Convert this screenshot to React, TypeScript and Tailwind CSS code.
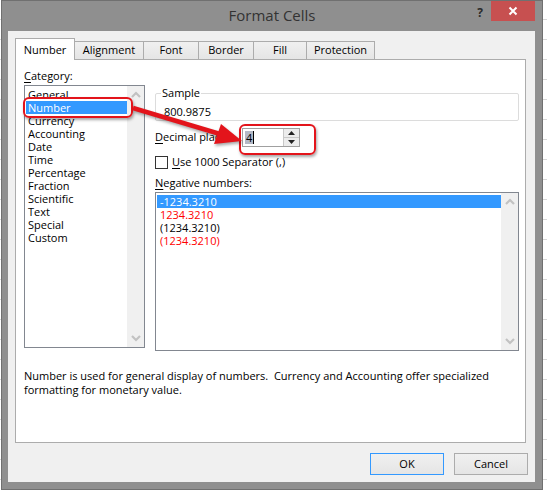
import React from 'react'

const categories = [
  'General',
  'Number',
  'Currency',
  'Accounting',
  'Date',
  'Time',
  'Percentage',
  'Fraction',
  'Scientific',
  'Text',
  'Special',
  'Custom',
]

const negatives = [
  { text: '-1234.3210', red: false, selected: true },
  { text: '1234.3210', red: true, selected: false },
  { text: '(1234.3210)', red: false, selected: false },
  { text: '(1234.3210)', red: true, selected: false },
]

const tabs = [
  { label: 'Alignment', w: 'w-[69px]' },
  { label: 'Font', w: 'w-[55px]' },
  { label: 'Border', w: 'w-[55px]' },
  { label: 'Fill', w: 'w-[53px]' },
  { label: 'Protection', w: 'w-[68px]' },
]

function Chevron({ up }: { up?: boolean }) {
  return (
    <svg width="10" height="7" viewBox="0 0 10 7">
      <polyline
        points={up ? '1,6 5,2 9,6' : '1,1 5,5 9,1'}
        fill="none"
        stroke="#c2c2c2"
        strokeWidth="2.2"
      />
    </svg>
  )
}

// disabled vertical scrollbar used by both list boxes
function ScrollBar() {
  return (
    <div className="w-[17px] h-full bg-[#f0f0f0] flex flex-col justify-between items-center py-[5px]">
      <Chevron up />
      <Chevron />
    </div>
  )
}

export default function App() {
  return (
    <div className="relative w-[547px] h-[492px] overflow-hidden bg-[repeating-linear-gradient(to_bottom,#ffffff_0px,#ffffff_19px,#d8d8d8_19px,#d8d8d8_20px)] font-['Open_Sans',sans-serif] text-[11px] text-black">
      {/* window */}
      <div className="ml-px w-[542px] h-[490px] border border-[#707070] bg-[#8f8f8f] flex flex-col">
        {/* title bar */}
        <div className="relative h-[30px] shrink-0">
          <div className="text-center text-[15px] leading-[28px] text-[#333333]">Format Cells</div>
          <span className="absolute right-[59px] top-[4px] text-[12px] font-bold leading-[16px] text-[#2b2b2b]">?</span>
          <div className="absolute right-[7px] top-0 w-[44px] h-[20px] bg-[#c75050] flex items-center justify-center">
            <svg width="10" height="10" viewBox="0 0 10 10">
              <path d="M1.5 1.5 L8.5 8.5 M8.5 1.5 L1.5 8.5" stroke="#fff" strokeWidth="2" />
            </svg>
          </div>
        </div>

        {/* client area */}
        <div className="ml-[6px] w-[527px] h-[451px] bg-[#f0f0f0] pt-[7px] pl-[7px] flex flex-col">
          {/* tabs */}
          <div className="flex items-end h-[21px]">
            <div className="relative z-10 w-[60px] h-[22px] -mb-px bg-white border-l border-t border-r border-[#acacac] flex items-center justify-center pt-[1px]">
              Number
            </div>
            {tabs.map((t) => (
              <div
                key={t.label}
                className={`${t.w} h-[18px] border-t border-r border-[#acacac] bg-[linear-gradient(#f0f0f0,#e5e5e5)] flex items-center justify-center`}
              >
                {t.label}
              </div>
            ))}
          </div>

          {/* tab page */}
          <div className="w-[511px] h-[384px] bg-white border border-[#acacac] pt-[8px] pl-[8px] flex flex-col">
            <div className="flex gap-[10px]">
              {/* category column */}
              <div className="w-[121px] flex flex-col">
                <div className="h-[16px] leading-[16px]">
                  <u className="underline-offset-2">C</u>ategory:
                </div>
                <div className="mt-px h-[263px] border border-[#828790] flex">
                  <div className="flex-1 pt-[2px] pl-px">
                    {categories.map((c) => (
                      <div
                        key={c}
                        className={`h-[13px] leading-[13px] pl-[2px] ${c === 'Number' ? 'bg-[#3399ff] text-white' : ''}`}
                      >
                        {c}
                      </div>
                    ))}
                  </div>
                  <ScrollBar />
                </div>
              </div>

              {/* options column */}
              <div className="w-[364px] flex flex-col">
                <div className="relative mt-[25px] h-[28px] border border-[#dcdcdc] rounded-[2px] pl-[8px] pt-[10px] leading-[16px]">
                  <span className="absolute -top-[9px] left-[5px] bg-white px-px leading-[16px]">Sample</span>
                  800.9875
                </div>

                <div className="mt-[7px] h-[19px] flex items-center">
                  <div className="w-[87px]">
                    <u className="underline-offset-2">D</u>ecimal places:
                  </div>
                  <div className="w-[58px] h-[19px] border border-[#a0a0a0] bg-white flex">
                    <div className="flex-1 flex items-center pl-[2px]">
                      <span className="bg-[#b4b9c6] leading-[13px] px-px">4</span>
                      <span className="w-px h-[13px] bg-black" />
                    </div>
                    <div className="w-[16px] flex flex-col border-l border-[#c8c8c8]">
                      <div className="flex-1 flex items-center justify-center bg-[#ececec] border-b border-[#c8c8c8]">
                        <svg width="7" height="4" viewBox="0 0 7 4">
                          <polygon points="0,4 3.5,0 7,4" fill="#222" />
                        </svg>
                      </div>
                      <div className="flex-1 flex items-center justify-center bg-[#ececec]">
                        <svg width="7" height="4" viewBox="0 0 7 4">
                          <polygon points="0,0 7,0 3.5,4" fill="#222" />
                        </svg>
                      </div>
                    </div>
                  </div>
                </div>

                <div className="mt-[7px] h-[16px] flex items-center">
                  <div className="w-[13px] h-[13px] border border-[#333333] bg-white" />
                  <div className="ml-[4px] leading-[16px]">
                    <u className="underline-offset-2">U</u>se 1000 Separator (,)
                  </div>
                </div>

                <div className="mt-[5px] h-[16px] leading-[16px]">
                  <u className="underline-offset-2">N</u>egative numbers:
                </div>
                <div className="mt-px h-[159px] border border-[#828790] flex">
                  <div className="flex-1 pt-[2px] pl-px">
                    {negatives.map((n, i) => (
                      <div
                        key={i}
                        className={`h-[13px] leading-[13px] pl-[3px] ${n.selected ? 'bg-[#3399ff] text-white' : n.red ? 'text-[#ff0000]' : ''}`}
                      >
                        {n.text}
                      </div>
                    ))}
                  </div>
                  <ScrollBar />
                </div>
              </div>
            </div>

            <p className="mt-[18px] leading-[14px] whitespace-pre">
              {'Number is used for general display of numbers.  Currency and Accounting offer specialized\nformatting for monetary value.'}
            </p>
          </div>

          {/* buttons */}
          <div className="mt-[10px] flex justify-end gap-[10px] pr-[7px]">
            <button className="w-[74px] h-[22px] border border-[#3399ff] bg-[linear-gradient(#f0f0f0,#e5e5e5)] text-[11px]">
              OK
            </button>
            <button className="w-[74px] h-[22px] border border-[#acacac] bg-[linear-gradient(#f0f0f0,#e5e5e5)] text-[11px]">
              Cancel
            </button>
          </div>
        </div>
      </div>

      {/* red annotations drawn over the dialog */}
      <div className="absolute left-[23px] top-[97px] w-[110px] h-[21px] border-2 border-[#e3141b] rounded-[6px] shadow-[1px_2px_3px_rgba(0,0,0,0.35)]" />
      <div className="absolute left-[239px] top-[124px] w-[77px] h-[31px] border-2 border-[#e3141b] rounded-[6px] shadow-[1px_2px_3px_rgba(0,0,0,0.35)]" />
      <svg className="absolute left-0 top-0 pointer-events-none" width="547" height="492" viewBox="0 0 547 492">
        <g style={{ filter: 'drop-shadow(1px 2px 1.5px rgba(0,0,0,0.35))' }}>
          <line x1="133" y1="108" x2="220" y2="134" stroke="#e3141b" strokeWidth="4.5" />
          <polygon points="242,141 221,124 214,144" fill="#e3141b" />
        </g>
      </svg>
    </div>
  )
}
